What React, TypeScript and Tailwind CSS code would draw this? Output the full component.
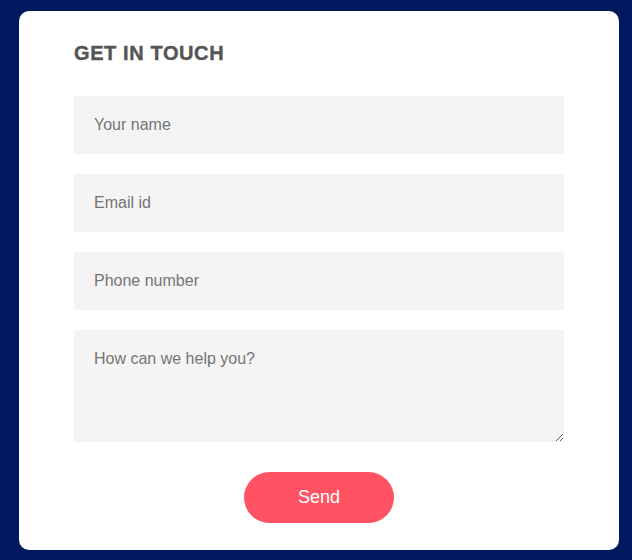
export default function App() {
  const fieldCls =
    "block w-full h-[58px] bg-[#f4f4f4] px-5 text-[16px] text-[#333] placeholder:text-[#757575] outline-none border-0";

  return (
    <div className="min-h-[560px] w-full bg-[#00185e] pt-[11px] pb-[10px] pl-[19px] pr-[13px] font-['Liberation_Sans',Arial,sans-serif]">
      <div className="w-[600px] h-[539px] rounded-[10px] bg-white px-[55px] pt-[20px]">
        <h2 className="text-[20px] leading-[44px] font-bold tracking-[0.6px] text-[#555555] [-webkit-text-stroke:0.4px_#555555]">GET IN TOUCH</h2>
        <form className="mt-[21px] flex flex-col gap-5" onSubmit={(e) => e.preventDefault()}>
          <input type="text" placeholder="Your name" className={fieldCls} />
          <input type="email" placeholder="Email id" className={fieldCls} />
          <input type="tel" placeholder="Phone number" className={fieldCls} />
          <textarea
            placeholder="How can we help you?"
            className="block w-full h-[112px] bg-[#f4f4f4] px-5 pt-[19px] pb-[17px] text-[16px] leading-[20px] text-[#333] placeholder:text-[#757575] outline-none border-0 resize-y"
          />
          <div className="flex justify-center mt-[10px]">
            <button
              type="submit"
              className="w-[150px] h-[51px] rounded-full bg-[#ff5364] text-white text-[18px]"
            >
              Send
            </button>
          </div>
        </form>
      </div>
    </div>
  );
}
